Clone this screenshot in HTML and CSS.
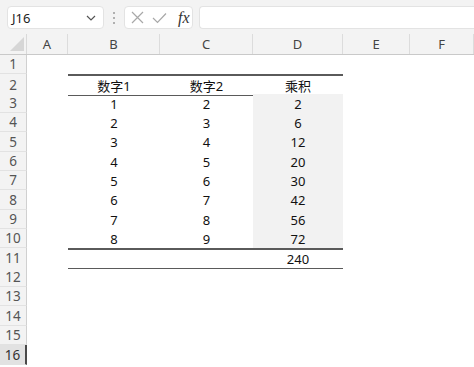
FILE: index.html
```html
<!DOCTYPE html>
<html lang="zh">
<head>
<meta charset="utf-8">
<link rel="stylesheet" href="styles.css">
</head>
<body>
<div class="app">
  <div class="toolbar">
    <div class="namebox">
      <span class="ref">J16</span>
      <svg class="chev" width="10" height="6" viewBox="0 0 10 6"><path d="M1 1 L5 5 L9 1" fill="none" stroke="#555" stroke-width="1.2"/></svg>
    </div>
    <div class="dots"><i></i><i></i><i></i></div>
    <div class="fbtns">
      <svg width="13" height="13" viewBox="0 0 13 13"><path d="M1 1 L12 12 M12 1 L1 12" stroke="#a8a8a8" stroke-width="1.2" fill="none"/></svg>
      <svg width="15" height="12" viewBox="0 0 15 12"><path d="M1 6 L5.5 10.5 L14 1.5" stroke="#a8a8a8" stroke-width="1.2" fill="none"/></svg>
      <span class="fx">fx</span>
    </div>
    <div class="finput"></div>
  </div>
  <div class="sheet">
    <div class="row colhead">
      <div class="corner"><svg width="14" height="14" viewBox="0 0 14 14"><path d="M14 0 L14 14 L0 14 Z" fill="#d6d6d6"/></svg></div>
      <div class="ch">A</div><div class="ch">B</div><div class="ch">C</div><div class="ch">D</div><div class="ch">E</div><div class="ch">F</div>
    </div>
    <div class="row r19"><div class="rh">1</div><div></div><div></div><div></div><div></div><div></div><div></div></div>
    <div class="row r20"><div class="rh">2</div><div></div><div class="c top hb">数字1</div><div class="c top hb">数字2</div><div class="c top hb">乘积</div><div></div><div></div></div>
    <div class="row r19"><div class="rh">3</div><div></div><div class="c">1</div><div class="c">2</div><div class="c sh">2</div><div></div><div></div></div>
    <div class="row r19"><div class="rh">4</div><div></div><div class="c">2</div><div class="c">3</div><div class="c sh">6</div><div></div><div></div></div>
    <div class="row r20"><div class="rh">5</div><div></div><div class="c">3</div><div class="c">4</div><div class="c sh">12</div><div></div><div></div></div>
    <div class="row r19"><div class="rh">6</div><div></div><div class="c">4</div><div class="c">5</div><div class="c sh">20</div><div></div><div></div></div>
    <div class="row r19"><div class="rh">7</div><div></div><div class="c">5</div><div class="c">6</div><div class="c sh">30</div><div></div><div></div></div>
    <div class="row r20"><div class="rh">8</div><div></div><div class="c">6</div><div class="c">7</div><div class="c sh">42</div><div></div><div></div></div>
    <div class="row r19"><div class="rh">9</div><div></div><div class="c">7</div><div class="c">8</div><div class="c sh">56</div><div></div><div></div></div>
    <div class="row r19"><div class="rh">10</div><div></div><div class="c">8</div><div class="c">9</div><div class="c sh">72</div><div></div><div></div></div>
    <div class="row r20"><div class="rh">11</div><div></div><div class="c tot"></div><div class="c tot"></div><div class="c tot">240</div><div></div><div></div></div>
    <div class="row r19"><div class="rh">12</div><div></div><div></div><div></div><div></div><div></div><div></div></div>
    <div class="row r19"><div class="rh">13</div><div></div><div></div><div></div><div></div><div></div><div></div></div>
    <div class="row r20"><div class="rh">14</div><div></div><div></div><div></div><div></div><div></div><div></div></div>
    <div class="row r19"><div class="rh">15</div><div></div><div></div><div></div><div></div><div></div><div></div></div>
    <div class="row r20"><div class="rh sel">16</div><div></div><div></div><div></div><div></div><div></div><div></div></div>
  </div>
</div>
</body>
</html>
```
FILE: styles.css
```css
* { box-sizing: border-box; }
html, body { margin: 0; padding: 0; }
body {
  width: 474px;
  height: 367px;
  overflow: hidden;
  background: #fff;
  font-family: "Noto Sans", "Noto Sans CJK SC", sans-serif;
}
.app { width: 474px; height: 367px; overflow: hidden; }
.toolbar {
  height: 34px;
  background: #f3f3f3;
  display: flex;
  align-items: flex-start;
  padding: 6px 0 0 7px;
}
.namebox {
  width: 97px;
  height: 23px;
  background: #fff;
  border: 1px solid #e3e3e3;
  border-radius: 4px;
  display: flex;
  align-items: center;
  justify-content: space-between;
  padding: 0 7px 0 4px;
}
.ref { font-size: 13px; color: #222; }
.dots {
  width: 20px;
  height: 23px;
  display: flex;
  flex-direction: column;
  align-items: center;
  justify-content: center;
  gap: 3px;
}
.dots i { display: block; width: 2px; height: 2px; background: #9a9a9a; border-radius: 1px; }
.fbtns {
  width: 69px;
  height: 23px;
  background: #fff;
  border: 1px solid #e3e3e3;
  border-radius: 4px;
  display: flex;
  align-items: center;
  padding: 0 0 0 6px;
  gap: 8px;
}
.fx {
  font-family: "Liberation Serif", "DejaVu Serif", serif;
  font-style: italic;
  font-size: 16px;
  color: #333;
  margin-left: 3px;
  line-height: 1;
}
.finput {
  flex: 1;
  height: 23px;
  margin-left: 6px;
  background: #fff;
  border: 1px solid #e3e3e3;
  border-right: none;
  border-radius: 4px 0 0 4px;
}
.sheet { display: flex; flex-direction: column; }
.row {
  display: grid;
  grid-template-columns: 27px 41px 92px 93px 90px 67px 1fr;
}
.r19 { height: 19px; }
.r20 { height: 20px; }
.colhead {
  height: 21px;
  background: #f3f3f3;
  border-bottom: 1px solid #c9c9c9;
}
.corner { display: flex; align-items: flex-end; justify-content: flex-end; padding: 0 2px 3px 0; border-right: 1px solid #d9d9d9; }
.ch {
  display: flex;
  align-items: center;
  justify-content: center;
  font-size: 13px;
  color: #444;
  border-right: 1px solid #dcdcdc;
}
.rh {
  background: #f3f3f3;
  border-right: 1px solid #d0d0d0;
  border-bottom: 1px solid #e2e2e2;
  display: flex;
  align-items: center;
  justify-content: center;
  font-size: 13.5px;
  color: #555;
}
.rh.sel {
  background: #e2e2e2;
  border-right: 2px solid #4a4a4a;
  color: #333;
}
.c {
  display: flex;
  align-items: center;
  justify-content: center;
  font-size: 13px;
  color: #111;
}
.top { border-top: 2px solid #5a5a5a; }
.hb { border-bottom: 1px solid #5a5a5a; }
.sh { background: #f2f2f2; }
.tot { border-top: 2px solid #5a5a5a; border-bottom: 1px solid #5a5a5a; }
```
